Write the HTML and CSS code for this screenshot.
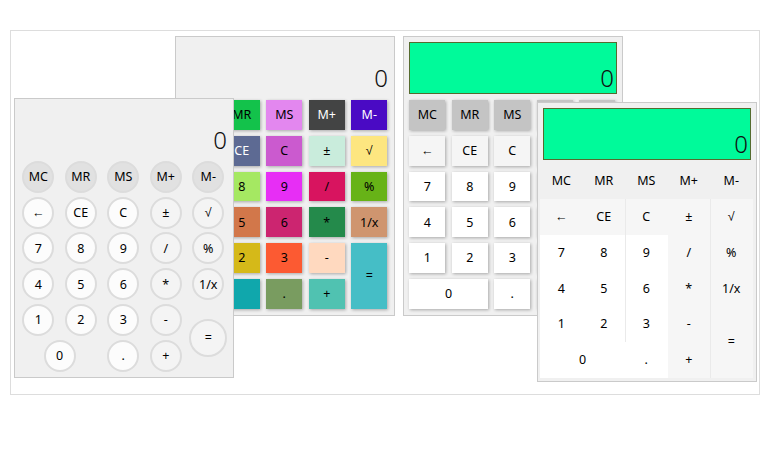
FILE: index.html
```html
<!DOCTYPE html>
<html lang="en">
  <head>
    <meta charset="UTF-8" />
    <meta name="viewport" content="width=device-width, initial-scale=1.0" />
    <title>Calculators</title>
    <link rel="stylesheet" href="styles.css">
  </head>
  <body>
    <div class="stage">
      <!-- colourful one -->
      <div class="calc calc-color pos-b">
        <div class="display">0</div>
        <div class="keys">
          <button class="key">MC</button>
          <button class="key">MR</button>
          <button class="key">MS</button>
          <button class="key">M+</button>
          <button class="key">M-</button>
          <button class="key">&larr;</button>
          <button class="key">CE</button>
          <button class="key">C</button>
          <button class="key">&plusmn;</button>
          <button class="key">&radic;</button>
          <button class="key">7</button>
          <button class="key">8</button>
          <button class="key">9</button>
          <button class="key">/</button>
          <button class="key">%</button>
          <button class="key">4</button>
          <button class="key">5</button>
          <button class="key">6</button>
          <button class="key">*</button>
          <button class="key">1/x</button>
          <button class="key">1</button>
          <button class="key">2</button>
          <button class="key">3</button>
          <button class="key">-</button>
          <button class="key eq">=</button>
          <button class="key zero">0</button>
          <button class="key">.</button>
          <button class="key">+</button>
        </div>
      </div>

      <!-- green display, square keys -->
      <div class="calc calc-green pos-c">
        <div class="display">0</div>
        <div class="keys">
          <button class="key mem">MC</button>
          <button class="key mem">MR</button>
          <button class="key mem">MS</button>
          <button class="key mem">M+</button>
          <button class="key mem">M-</button>
          <button class="key fn">&larr;</button>
          <button class="key fn">CE</button>
          <button class="key fn">C</button>
          <button class="key op">&plusmn;</button>
          <button class="key op">&radic;</button>
          <button class="key num">7</button>
          <button class="key num">8</button>
          <button class="key num">9</button>
          <button class="key op">/</button>
          <button class="key op">%</button>
          <button class="key num">4</button>
          <button class="key num">5</button>
          <button class="key num">6</button>
          <button class="key op">*</button>
          <button class="key op">1/x</button>
          <button class="key num">1</button>
          <button class="key num">2</button>
          <button class="key num">3</button>
          <button class="key op">-</button>
          <button class="key op eq">=</button>
          <button class="key num zero">0</button>
          <button class="key num">.</button>
          <button class="key op">+</button>
        </div>
      </div>

      <!-- round keys -->
      <div class="calc calc-round pos-a">
        <div class="display">0</div>
        <div class="keys">
          <button class="key mem">MC</button>
          <button class="key mem">MR</button>
          <button class="key mem">MS</button>
          <button class="key mem">M+</button>
          <button class="key mem">M-</button>
          <button class="key fn">&larr;</button>
          <button class="key fn">CE</button>
          <button class="key fn">C</button>
          <button class="key op">&plusmn;</button>
          <button class="key op">&radic;</button>
          <button class="key num">7</button>
          <button class="key num">8</button>
          <button class="key num">9</button>
          <button class="key op">/</button>
          <button class="key op">%</button>
          <button class="key num">4</button>
          <button class="key num">5</button>
          <button class="key num">6</button>
          <button class="key op">*</button>
          <button class="key op">1/x</button>
          <button class="key num">1</button>
          <button class="key num">2</button>
          <button class="key num">3</button>
          <button class="key op">-</button>
          <button class="key op eq">=</button>
          <button class="key num zero">0</button>
          <button class="key num">.</button>
          <button class="key op">+</button>
        </div>
      </div>

      <!-- flat keys -->
      <div class="calc calc-flat pos-d">
        <div class="display">0</div>
        <div class="keys">
          <button class="key mem">MC</button>
          <button class="key mem">MR</button>
          <button class="key mem">MS</button>
          <button class="key mem">M+</button>
          <button class="key mem">M-</button>
          <button class="key fn">&larr;</button>
          <button class="key fn">CE</button>
          <button class="key fn line">C</button>
          <button class="key fn">&plusmn;</button>
          <button class="key fn line">&radic;</button>
          <button class="key num">7</button>
          <button class="key num">8</button>
          <button class="key num line">9</button>
          <button class="key op">/</button>
          <button class="key op line">%</button>
          <button class="key num">4</button>
          <button class="key num">5</button>
          <button class="key num line">6</button>
          <button class="key op">*</button>
          <button class="key op line">1/x</button>
          <button class="key num">1</button>
          <button class="key num">2</button>
          <button class="key num line">3</button>
          <button class="key op">-</button>
          <button class="key op eq line">=</button>
          <button class="key num zero">0</button>
          <button class="key num">.</button>
          <button class="key op">+</button>
        </div>
      </div>
    </div>
  </body>
</html>
```

FILE: styles.css
```css
body {
  margin: 0;
  font-family: "Noto Sans", sans-serif;
  color: #000;
}

.stage {
  position: relative;
  margin: 30px 10px 0;
  height: 363px;
  border: 1px solid #dddddd;
}

.calc {
  position: absolute;
  box-sizing: border-box;
  width: 220px;
  height: 280px;
  border: 1px solid #cacaca;
  background-color: #f0f0f0;
}

.pos-a {
  left: 3px;
  top: 67px;
}

.pos-b {
  left: 164px;
  top: 5px;
}

.pos-c {
  left: 392px;
  top: 5px;
}

.pos-d {
  left: 526px;
  top: 71px;
}

.display {
  box-sizing: border-box;
  height: 52px;
  margin: 5px 5px 0;
  border: 1px solid transparent;
  display: flex;
  justify-content: flex-end;
  align-items: flex-end;
  font-size: 24px;
  font-weight: 300;
  line-height: 31px;
  color: #111;
}

.calc-green .display,
.calc-flat .display {
  background-color: #00fa9a;
  border-color: #556b2f;
  padding-right: 2px;
}

.keys {
  display: grid;
  grid-template-columns: repeat(5, 42.5px);
  grid-template-rows: repeat(6, 35.75px);
  margin: 3px 0 0 2px;
}

.key {
  margin: 3px 3.25px;
  padding: 0;
  border: none;
  font-family: inherit;
  font-size: 12.5px;
  color: #000;
  cursor: pointer;
}

.eq {
  grid-column: 5;
  grid-row: 5 / span 2;
}

.zero {
  grid-column: span 2;
}

/* square keys with shadow */
.calc-color .key,
.calc-green .key {
  box-shadow: 1px 1px 3px rgba(0, 0, 0, 0.3);
}

.calc-green .mem {
  background-color: #c4c4c4;
}

.calc-green .fn,
.calc-green .op {
  background-color: #f5f5f5;
}

.calc-green .num {
  background-color: #fff;
}

/* colourful keys */
.calc-color .key:nth-child(1) { background-color: #f2994a; }
.calc-color .key:nth-child(2) { background-color: #13c24b; }
.calc-color .key:nth-child(3) { background-color: #e387ef; }
.calc-color .key:nth-child(4) { background-color: #434444; color: #fff; }
.calc-color .key:nth-child(5) { background-color: #4a0ac4; color: #fff; }
.calc-color .key:nth-child(6) { background-color: #3f7fd8; }
.calc-color .key:nth-child(7) { background-color: #5d6a93; color: #fff; }
.calc-color .key:nth-child(8) { background-color: #cb5acf; }
.calc-color .key:nth-child(9) { background-color: #c9ecdc; }
.calc-color .key:nth-child(10) { background-color: #fde680; }
.calc-color .key:nth-child(11) { background-color: #8e6fd0; }
.calc-color .key:nth-child(12) { background-color: #a5e862; }
.calc-color .key:nth-child(13) { background-color: #e72ef5; }
.calc-color .key:nth-child(14) { background-color: #d8145f; }
.calc-color .key:nth-child(15) { background-color: #67b317; }
.calc-color .key:nth-child(16) { background-color: #e8c24f; }
.calc-color .key:nth-child(17) { background-color: #d2774a; }
.calc-color .key:nth-child(18) { background-color: #cc2570; }
.calc-color .key:nth-child(19) { background-color: #248a4b; }
.calc-color .key:nth-child(20) { background-color: #cf956f; }
.calc-color .key:nth-child(21) { background-color: #6bc0e8; }
.calc-color .key:nth-child(22) { background-color: #d5b919; }
.calc-color .key:nth-child(23) { background-color: #fc5a32; }
.calc-color .key:nth-child(24) { background-color: #ffd9bf; }
.calc-color .key:nth-child(25) { background-color: #45bec6; }
.calc-color .key:nth-child(26) { background-color: #10a7ac; }
.calc-color .key:nth-child(27) { background-color: #799c60; }
.calc-color .key:nth-child(28) { background-color: #50c2b1; }

/* round keys */
.calc-round .key {
  margin: 0;
  width: 32px;
  height: 32px;
  justify-self: center;
  align-self: center;
  border: 2px solid #dcdcdc;
  border-radius: 50%;
  background-color: #fcfcfc;
}

.calc-round .mem {
  background-color: #e1e1e1;
}

.calc-round .op {
  background-color: #f4f4f4;
}

.calc-round .eq {
  width: 38px;
  height: 38px;
}

/* flat keys */
.calc-flat .key {
  margin: 0;
  background-color: transparent;
}

.calc-flat .fn,
.calc-flat .op {
  background-color: #f6f6f6;
}

.calc-flat .num {
  background-color: #fff;
}

.calc-flat .line {
  box-shadow: inset 1px 0 0 #eaeaea;
}
```
